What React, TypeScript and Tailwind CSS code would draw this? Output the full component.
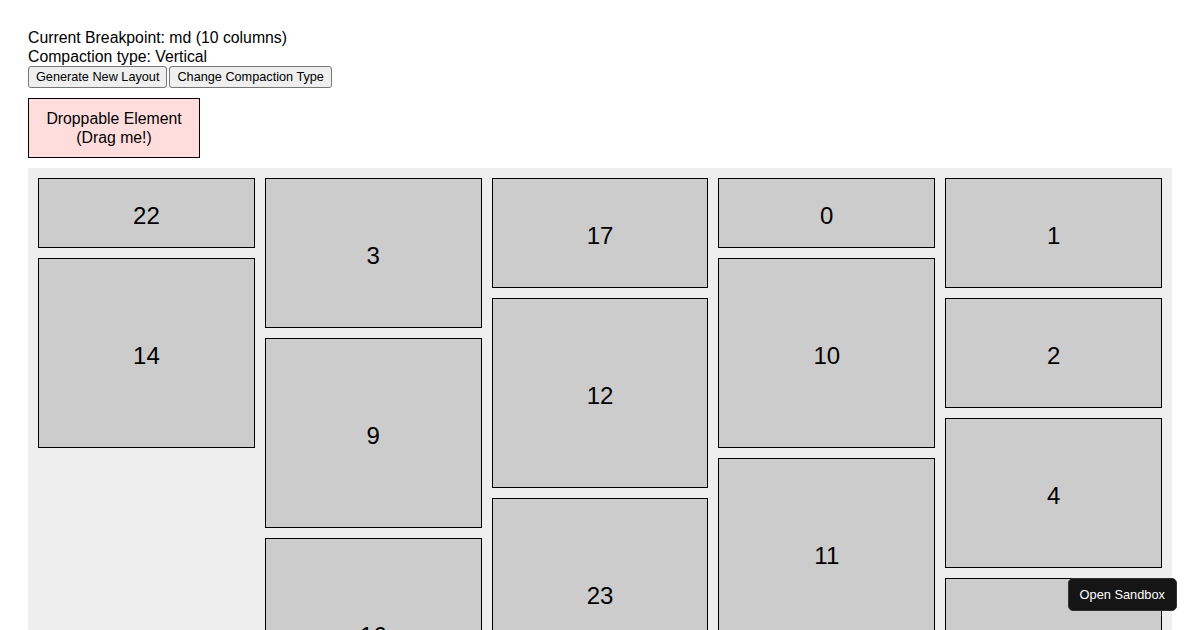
import React from 'react';

type Item = { i: string; h: number };

const columns: Item[][] = [
  [{ i: '22', h: 2 }, { i: '14', h: 5 }],
  [{ i: '3', h: 4 }, { i: '9', h: 5 }, { i: '16', h: 5 }],
  [{ i: '17', h: 3 }, { i: '12', h: 5 }, { i: '23', h: 5 }],
  [{ i: '0', h: 2 }, { i: '10', h: 5 }, { i: '11', h: 5 }],
  [{ i: '1', h: 3 }, { i: '2', h: 3 }, { i: '4', h: 4 }, { i: '5', h: 4 }],
];

// rowHeight 30, margin 10
const heightClass: Record<number, string> = {
  2: 'h-[70px]',
  3: 'h-[110px]',
  4: 'h-[150px]',
  5: 'h-[190px]',
};

function GridItem({ item }: { item: Item }) {
  return (
    <div
      className={`${heightClass[item.h]} shrink-0 bg-[#ccc] border border-black flex items-center justify-center pt-[4px] text-[24px] text-black`}
    >
      {item.i}
    </div>
  );
}

export default function App() {
  return (
    <div className="min-h-[760px] bg-white px-[28px] pt-[28px] text-[15.8px] leading-[19px] text-black font-['Liberation_Sans',Arial,sans-serif]">
      <div>Current Breakpoint: md (10 columns)</div>
      <div>Compaction type: Vertical</div>
      <div className="flex gap-[2px]">
        <button className="bg-[#efefef] border border-[#767676] rounded-[3px] px-[7px] py-[2px] text-[12.7px] leading-[16px] text-black">
          Generate New Layout
        </button>
        <button className="bg-[#efefef] border border-[#767676] rounded-[3px] px-[7px] py-[2px] text-[12.7px] leading-[16px] text-black">
          Change Compaction Type
        </button>
      </div>
      <div className="w-[172px] my-[10px] p-[10px] bg-[#fdd] border border-black text-center">
        Droppable Element (Drag me!)
      </div>
      <div className="bg-[#eee] p-[10px] h-[700px] grid grid-cols-5 gap-[10px]">
        {columns.map((col, ci) => (
          <div key={ci} className="flex flex-col gap-[10px]">
            {col.map((item) => (
              <GridItem key={item.i} item={item} />
            ))}
          </div>
        ))}
      </div>
      <button className="fixed right-[23px] bottom-[19px] bg-[#151515] text-white rounded-[5px] px-[11px] h-[33px] text-[12.8px] border border-[#333]">
        Open Sandbox
      </button>
    </div>
  );
}
